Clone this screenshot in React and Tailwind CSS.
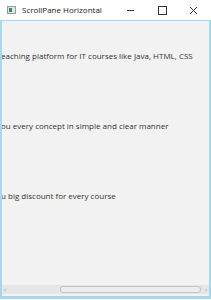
import React from 'react';

const lines = [
  { text: 'eaching platform for IT courses like Java, HTML, CSS', shift: '-ml-[1px]' },
  { text: 'ou every concept in simple and clear manner', shift: '-ml-[1px]' },
  { text: 'u big discount for every course', shift: '-ml-[1px]' },
];

export default function App() {
  return (
    <div className="w-[211px] h-[300px] bg-white flex flex-col overflow-hidden" style={{ fontFamily: '"Open Sans", "Noto Sans", sans-serif' }}>
      {/* Title bar */}
      <div className="h-[20px] flex items-center text-[#1a1a1a]">
        <div className="ml-[7px] w-[9px] h-[8px] border border-[#9a9a9a] bg-[#dfe6ea] flex items-center">
          <div className="w-[3px] h-[4px] bg-[#3a8a6a] ml-[1px]" />
        </div>
        <span className="ml-[6px] text-[8px] leading-none">ScrollPane Horizontal</span>
        <div className="flex-1" />
        <div className="w-[7px] h-px bg-[#333] mr-[24px]" />
        <div className="w-[9px] h-[9px] border border-[#333] mr-[22px]" />
        <svg width="9" height="9" viewBox="0 0 9 9" className="mr-[13px]">
          <path d="M1 1L8 8M8 1L1 8" stroke="#333" strokeWidth="1" />
        </svg>
      </div>

      {/* Window frame */}
      <div className="flex-1 flex flex-col border-x-2 border-b-[3px] border-t border-[#a6d7ea] bg-[#f2f2f2] mb-[1px]">
        <div className="flex-1 overflow-hidden pt-[29px] flex flex-col gap-[58px] text-[8px] leading-[12px] text-[#333]">
          {lines.map((l) => (
            <div key={l.text} className={`whitespace-nowrap ${l.shift}`}>{l.text}</div>
          ))}
        </div>

        {/* Horizontal scrollbar */}
        <div className="h-[9px] mb-[2px] bg-[#e6e6e6] flex items-center px-[2px]">
          <span className="text-[7px] leading-none text-[#9a9a9a] w-[8px]">‹</span>
          <div className="ml-[48px] flex-1 h-[7px] rounded-[3px] border border-[#c3c3c3] bg-[#ececec]" />
          <span className="text-[7px] leading-none text-[#9a9a9a] w-[6px] text-right">›</span>
        </div>
      </div>
    </div>
  );
}
